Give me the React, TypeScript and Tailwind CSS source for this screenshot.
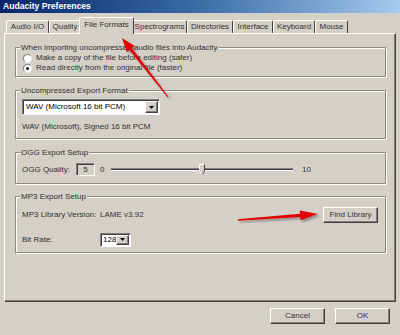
import React from 'react';

const raised =
  'border border-t-white border-l-white border-r-[#404040] border-b-[#404040] shadow-[inset_-1px_-1px_0_#808080]';
const sunken =
  'border border-t-[#808080] border-l-[#808080] border-r-white border-b-white shadow-[inset_1px_1px_0_#404040]';

const Group = ({ label, className, children }: { label: string; className: string; children?: React.ReactNode }) => (
  <div className={`border border-[#8c8a85] shadow-[inset_1px_1px_0_#fff,1px_1px_0_#fff] ${className}`}>
    <div className="-mt-[6px] ml-[4px] w-fit px-[1px] h-[11px] leading-[11px] bg-[#d4d0c8]">{label}</div>
    {children}
  </div>
);

const Radio = ({ checked, label }: { checked?: boolean; label: string }) => (
  <div className="flex items-center h-[10px] pl-[7px] gap-[4px]">
    <div className="w-[9px] h-[9px] rounded-full bg-white border border-t-[#808080] border-l-[#808080] border-r-[#e8e8e8] border-b-[#e8e8e8] flex items-center justify-center">
      {checked && <div className="w-[3px] h-[3px] rounded-full bg-black" />}
    </div>
    <span className="leading-[10px]">{label}</span>
  </div>
);

const DropArrow = () => (
  <div className={`w-[13px] h-full bg-[#d4d0c8] flex items-center justify-center ${raised}`}>
    <svg width="5" height="3" viewBox="0 0 5 3">
      <path d="M0 0h5L2.5 3z" fill="#000" />
    </svg>
  </div>
);

const Button = ({ label, className }: { label: string; className: string }) => (
  <div className={`h-[16px] flex items-center justify-center bg-[#d4d0c8] ${raised} ${className}`}>{label}</div>
);

const tabs = [
  { name: 'Audio I/O', w: 'w-[43px]' },
  { name: 'Quality', w: 'w-[32px]' },
  { name: 'File Formats', w: 'w-[51px]', active: true },
  { name: 'Spectrograms', w: 'w-[55px]' },
  { name: 'Directories', w: 'w-[46px]' },
  { name: 'Interface', w: 'w-[40px]' },
  { name: 'Keyboard', w: 'w-[42px]' },
  { name: 'Mouse', w: 'w-[33px]' },
];

export default function App() {
  return (
    <div className="relative w-[400px] h-[335px] overflow-hidden bg-[#d4d0c8] flex flex-col font-['Liberation_Sans',Arial,sans-serif] text-[8px] text-[#303030]">
      {/* Title bar */}
      <div className="h-[13px] shrink-0 bg-gradient-to-r from-[#0a246a] via-[#3a6ea5] to-[#a6caf0] flex items-center pl-[3px] text-white font-bold text-[8.6px]">
        Audacity Preferences
      </div>

      {/* Tabs */}
      <div className="h-[20px] shrink-0 flex items-end pl-[6px]">
        {tabs.map((t) =>
          t.active ? (
            <div
              key={t.name}
              className={`relative z-10 -mx-[2px] -mb-px w-[55px] h-[17px] pb-[2px] flex items-center justify-center bg-[#d4d0c8] border-t border-l border-r border-t-white border-l-white border-r-[#404040] rounded-t-[2px]`}
            >
              {t.name}
            </div>
          ) : (
            <div
              key={t.name}
              className={`${t.w} h-[13px] flex items-center justify-center border-t border-l border-r border-t-white border-l-white border-r-[#404040] rounded-t-[2px]`}
            >
              {t.name}
            </div>
          )
        )}
      </div>

      {/* Panel */}
      <div className="mx-[4px] h-[269px] shrink-0 border border-t-white border-l-white border-r-[#404040] border-b-[#404040] shadow-[inset_-1px_-1px_0_#808080] pt-[13px] pl-[10px] pr-[9px] flex flex-col">
        <Group label="When importing uncompressed audio files into Audacity" className="h-[30px]">
          <Radio label="Make a copy of the file before editing (safer)" />
          <Radio checked label="Read directly from the original file (faster)" />
        </Group>

        <Group label="Uncompressed Export Format" className="h-[49px] mt-[13px]">
          <div className={`mt-[3px] ml-[6px] w-[138px] h-[16px] bg-white flex items-center ${sunken} p-[1px]`}>
            <span className="flex-1 pl-[2px] text-black">WAV (Microsoft 16 bit PCM)</span>
            <DropArrow />
          </div>
          <div className="mt-[6px] ml-[6px] h-[11px] leading-[11px]">WAV (Microsoft), Signed 16 bit PCM</div>
        </Group>

        <Group label="OGG Export Setup" className="h-[32px] mt-[13px]">
          <div className="mt-[5px] h-[13px] pl-[6px] flex items-center">
            <span className="w-[54px]">OGG Quality:</span>
            <div className={`w-[19px] h-[13px] flex items-center justify-center ${sunken}`}>5</div>
            <span className="ml-[5px] w-[6px]">0</span>
            <div className="relative ml-[5px] w-[182px] h-[11px] flex items-center">
              <div className="w-full h-[3px] border-t border-t-[#808080] border-b border-b-white bg-[#404040]" />
              <svg className="absolute left-[88px] top-0" width="6" height="11" viewBox="0 0 6 11">
                <path d="M0.5 0.5h5v7l-2.5 3l-2.5-3z" fill="#d4d0c8" stroke="#fff" />
                <path d="M5.5 0.5v7l-2.5 3" fill="none" stroke="#404040" />
              </svg>
            </div>
            <span className="ml-[9px]">10</span>
          </div>
        </Group>

        <Group label="MP3 Export Setup" className="h-[57px] mt-[12px]">
          <div className="mt-[5px] h-[16px] pl-[6px] pr-[7px] flex items-center">
            <span className="w-[78px]">MP3 Library Version:</span>
            <span className="flex-1">LAME v3.92</span>
            <Button label="Find Library" className="w-[55px]" />
          </div>
          <div className="mt-[10px] h-[13px] pl-[6px] flex items-center">
            <span className="w-[78px]">Bit Rate:</span>
            <div className={`w-[31px] h-[14px] bg-white flex items-center ${sunken} p-[1px]`}>
              <span className="flex-1 pl-[1px] text-black">128</span>
              <DropArrow />
            </div>
          </div>
        </Group>
      </div>

      {/* Buttons */}
      <div className="mt-[6px] flex justify-end gap-[10px] pr-[10px]">
        <Button label="Cancel" className="w-[55px]" />
        <Button label="OK" className="w-[55px]" />
      </div>

      {/* Red annotation arrows */}
      <svg className="absolute inset-0 pointer-events-none" width="400" height="335" viewBox="0 0 400 335">
        <defs>
          <filter id="sh" x="-20%" y="-20%" width="140%" height="140%">
            <feDropShadow dx="2" dy="2" stdDeviation="1.3" floodColor="#000" floodOpacity="0.35" />
          </filter>
        </defs>
        <polygon
          filter="url(#sh)"
          fill="#e00000"
          points="168.4,96.7 131.8,48.1 134.5,45.9 122,38 126.7,52.1 129.4,49.9 167.6,97.3"
        />
        <polygon
          filter="url(#sh)"
          fill="#e00000"
          points="237.95,219.3 300,213.7 299.7,210.4 318,214 300.5,220.3 300.2,217 238.05,220.7"
        />
      </svg>
    </div>
  );
}
